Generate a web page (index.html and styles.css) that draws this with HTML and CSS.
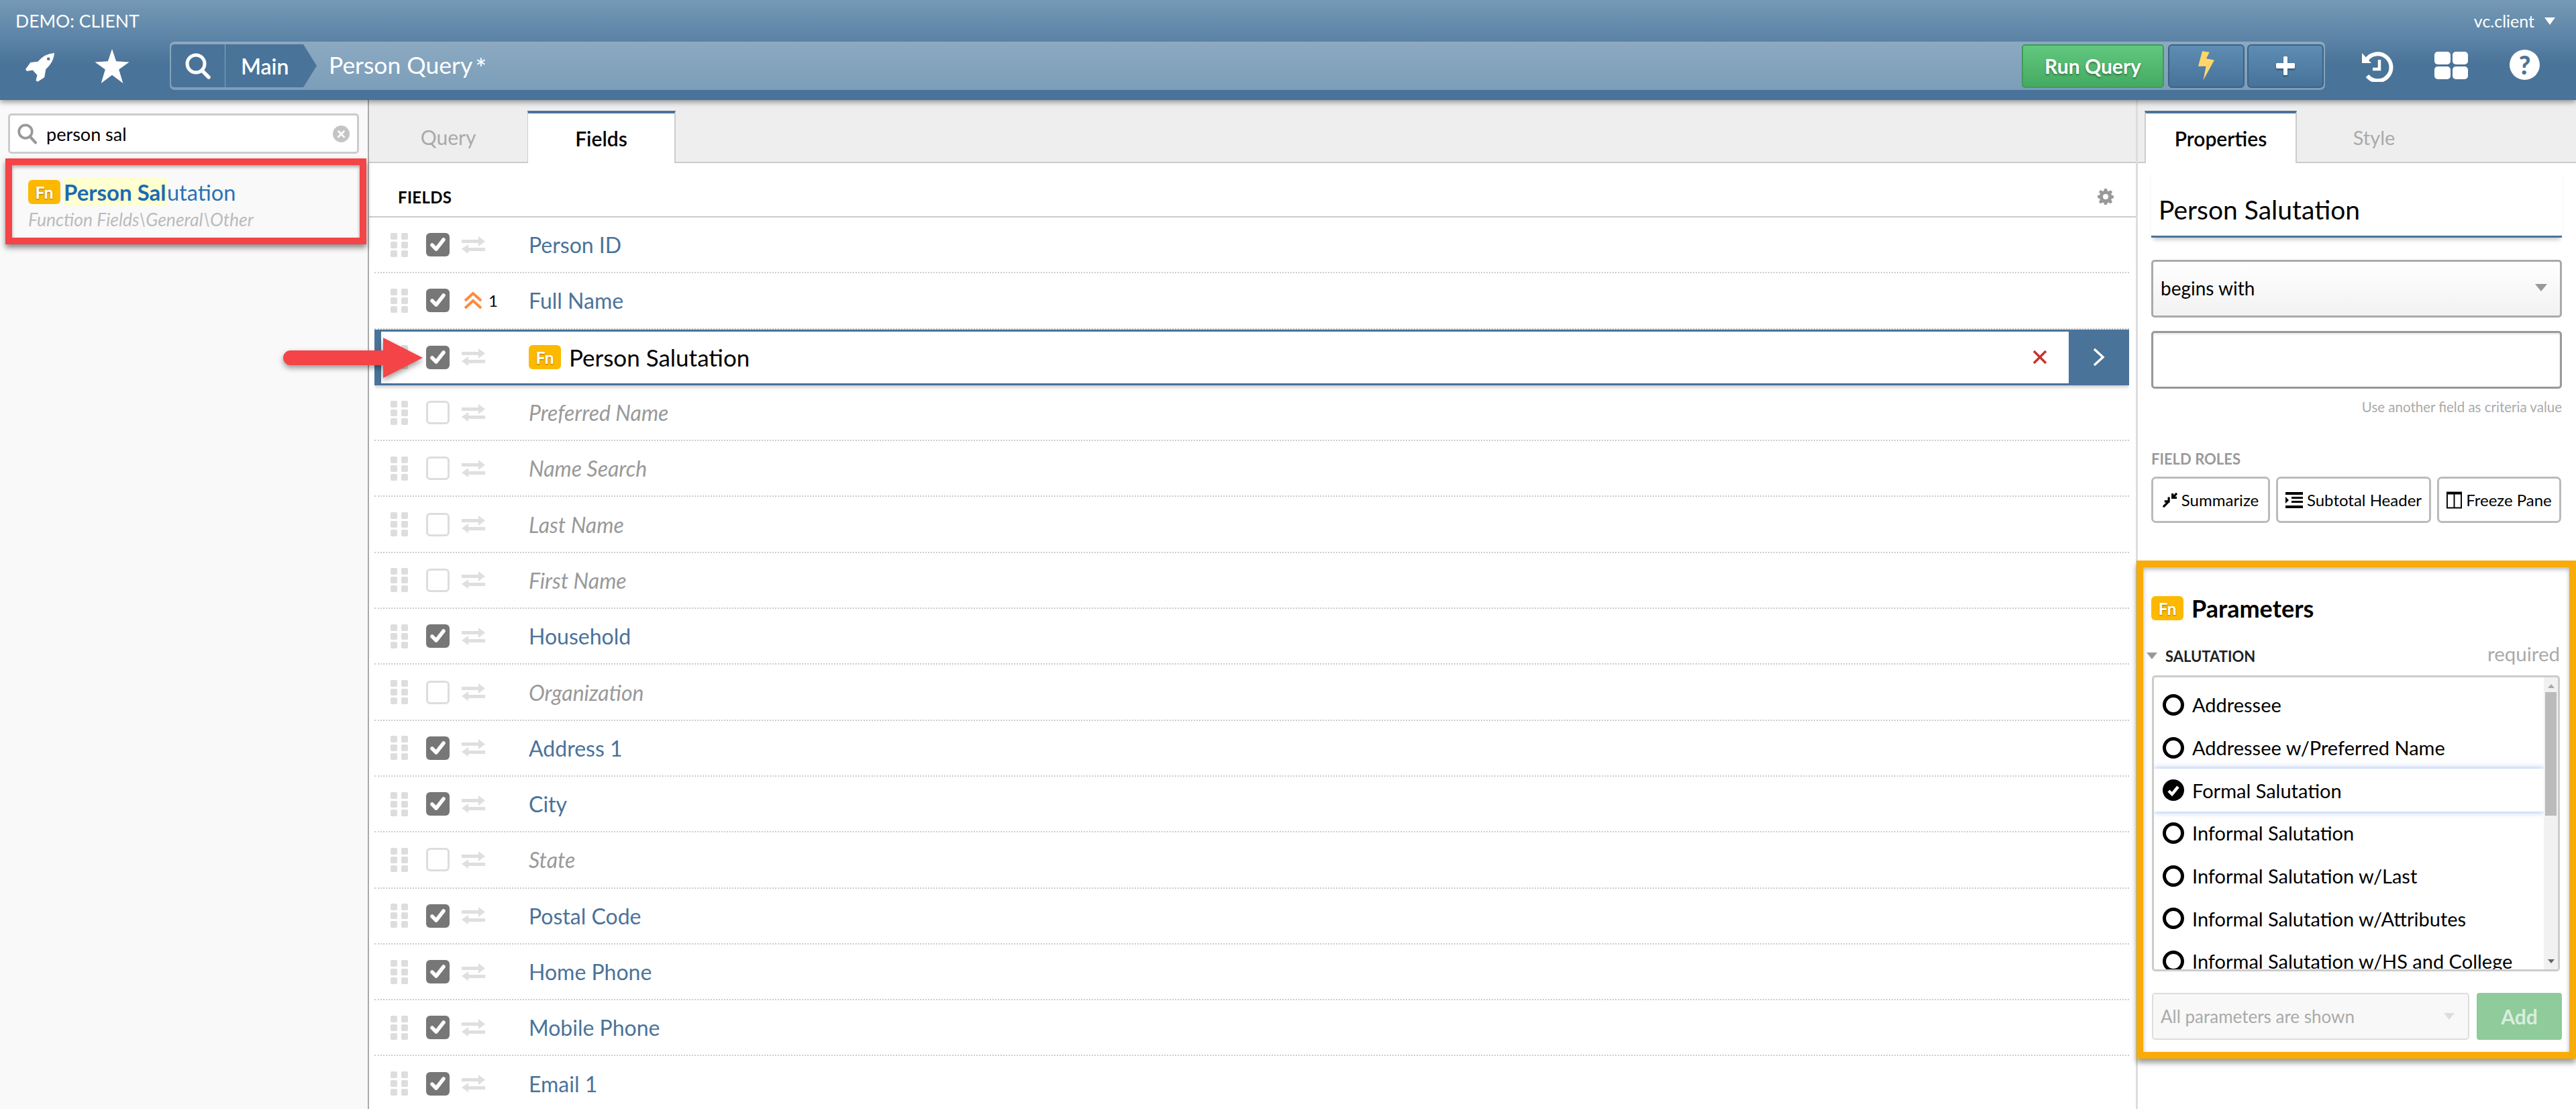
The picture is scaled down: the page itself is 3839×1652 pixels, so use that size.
FILE: index.html
```html
<!DOCTYPE html>
<html lang="en">
<head>
<meta charset="utf-8">
<title>Person Query</title>
<link rel="stylesheet" href="styles.css">
</head>
<body>
<svg class="defs" width="0" height="0" aria-hidden="true">
  <symbol id="i-check" viewBox="0 0 35 35"><path d="M9 18l6 6L26 10" fill="none" stroke="#fff" stroke-width="5.5" stroke-linecap="round" stroke-linejoin="round"/></symbol>
  <symbol id="i-swap" viewBox="0 0 35 26"><path d="M0 5h25V0l10 7.5L25 15v-5H0zM35 17H10v-5L0 19l10 7v-4h25z" fill="#dfdfdf"/></symbol>
</svg>
<header class="topbar">
  <div class="top-row"><span class="demo">DEMO: CLIENT</span><span class="user">vc.client<i class="caret-white"></i></span></div>
  <div class="nav-row">
    <svg class="ic-rocket" viewBox="0 0 128 128"><path fill="#fff" fill-rule="evenodd" d="M128 0C100 2 75 14 55 38L22 42 0 72l6 8 26-4 20 22-6 24 8 5 30-19 6-36C115 50 126 25 128 0ZM102 19a7 7 0 1 1 0 14 7 7 0 0 1 0-14Z"/></svg>
    <svg class="ic-star" viewBox="0 0 100 100"><path fill="#fff" d="M50 0 62 36 100 38 70 60 82 100 50 76 18 100 30 60 0 38 38 36Z"/></svg>
    <div class="crumbs">
      <div class="crumb-search"><svg viewBox="0 0 40 40" class="ic-search"><circle cx="17" cy="17" r="13" fill="none" stroke="#fff" stroke-width="5"/><path d="M26 27l10 10" stroke="#fff" stroke-width="5.5" stroke-linecap="round"/></svg></div>
      <div class="crumb-main">Main</div>
      <div class="crumb-title">Person Query <span class="star-mark">*</span></div>
      <button class="btn-run">Run Query</button>
      <button class="btn-blue"><svg viewBox="0 0 72 131" class="ic-bolt"><path fill="#ffd66b" d="M18 0 50 5 36 33 72 40 22 131 35 68 0 68Z"/></svg></button>
      <button class="btn-blue"><svg viewBox="0 0 30 30" class="ic-plus"><path fill="#fff" d="M12 2a2 2 0 0 1 2-1h2a2 2 0 0 1 2 1v9h10a2 2 0 0 1 1 2v4a2 2 0 0 1-1 2H18v9a2 2 0 0 1-2 1h-2a2 2 0 0 1-2-1v-9H2a2 2 0 0 1-1-2v-4a2 2 0 0 1 1-2h10z"/></svg></button>
    </div>
    <svg class="ic-history" viewBox="0 0 48 46"><path d="M7 13A20 20 0 1 1 8 37" fill="none" stroke="#fff" stroke-width="6"/><path fill="#fff" d="M0 3 14 18H0Z"/><path d="M26 13v14H16" fill="none" stroke="#fff" stroke-width="4.5"/></svg>
    <div class="ic-grid"><i></i><i></i><i></i><i></i></div>
    <div class="ic-help">?</div>
  </div>
</header>
<main class="body">
  <aside class="left">
    <div class="search">
      <svg viewBox="0 0 40 40" class="ic-search-small"><circle cx="16" cy="16" r="13" fill="none" stroke="#999" stroke-width="5"/><path d="M25 26l11 12" stroke="#999" stroke-width="5.5" stroke-linecap="round"/></svg>
      <span class="search-text">person sal</span>
      <span class="clear">&#215;</span>
    </div>
    <div class="result">
      <div class="result-name"><span class="fn">Fn</span><span class="hl">Person Sal</span><span>utation</span></div>
      <div class="result-sub">Function Fields\General\Other</div>
    </div>
  </aside>
  <section class="center">
    <nav class="tabs">
      <div class="tab tab-query">Query</div>
      <div class="tab tab-active">Fields</div>
    </nav>
    <div class="fields-head"><span>FIELDS</span>
      <svg viewBox="0 0 24 24" class="ic-gear"><path fill="#999" fill-rule="evenodd" d="M10 0h4l.6 3.3 2 .8L19.400 2.200l2.800 2.800-2 2.800.9 2L24 10.400v3.800l-2.900.6-.9 2 2 2.800-2.800 2.800-2.800-2-2 .9-.6 2.900h-4l-.6-3-2-.8-2.800 2-2.800-2.800 2-2.800-.8-2L0 14v-4l3.100-.6.800-2-2-2.700L4.700 1.900l2.800 2 1.900-.8zM12 8a4 4 0 1 0 0 8 4 4 0 0 0 0-8z"/></svg>
    </div>
    <div class="rows">
      <div class="row"><div class="grip"><i></i><i></i><i></i><i></i><i></i><i></i></div><div class="cb on"><svg><use href="#i-check"/></svg></div><svg class="swap"><use href="#i-swap"/></svg><div class="name">Person ID</div></div>
      <div class="row"><div class="grip"><i></i><i></i><i></i><i></i><i></i><i></i></div><div class="cb on"><svg><use href="#i-check"/></svg></div><div class="sort"><svg viewBox="0 0 28 26" class="ic-sort"><path d="M2 13 14 2l12 11M2 24 14 13l12 11" fill="none" stroke="#ff8a3c" stroke-width="4"/></svg><span>1</span></div><div class="name">Full Name</div></div>
      <div class="row row-sel"><div class="grip"><i></i><i></i><i></i><i></i><i></i><i></i></div><div class="cb on"><svg><use href="#i-check"/></svg></div><svg class="swap"><use href="#i-swap"/></svg><div class="name name-sel"><span class="fn">Fn</span>Person Salutation</div>
        <svg viewBox="0 0 22 22" class="ic-x"><path d="M2 2l18 18M20 2 2 20" stroke="#c8322f" stroke-width="3.500"/></svg>
        <div class="row-go"><svg viewBox="0 0 18 28" class="ic-chev"><path d="M2 2l13 12L2 26" fill="none" stroke="#fff" stroke-width="3.500"/></svg></div>
      </div>
      <div class="row off"><div class="grip"><i></i><i></i><i></i><i></i><i></i><i></i></div><div class="cb"></div><svg class="swap"><use href="#i-swap"/></svg><div class="name">Preferred Name</div></div>
      <div class="row off"><div class="grip"><i></i><i></i><i></i><i></i><i></i><i></i></div><div class="cb"></div><svg class="swap"><use href="#i-swap"/></svg><div class="name">Name Search</div></div>
      <div class="row off"><div class="grip"><i></i><i></i><i></i><i></i><i></i><i></i></div><div class="cb"></div><svg class="swap"><use href="#i-swap"/></svg><div class="name">Last Name</div></div>
      <div class="row off"><div class="grip"><i></i><i></i><i></i><i></i><i></i><i></i></div><div class="cb"></div><svg class="swap"><use href="#i-swap"/></svg><div class="name">First Name</div></div>
      <div class="row"><div class="grip"><i></i><i></i><i></i><i></i><i></i><i></i></div><div class="cb on"><svg><use href="#i-check"/></svg></div><svg class="swap"><use href="#i-swap"/></svg><div class="name">Household</div></div>
      <div class="row off"><div class="grip"><i></i><i></i><i></i><i></i><i></i><i></i></div><div class="cb"></div><svg class="swap"><use href="#i-swap"/></svg><div class="name">Organization</div></div>
      <div class="row"><div class="grip"><i></i><i></i><i></i><i></i><i></i><i></i></div><div class="cb on"><svg><use href="#i-check"/></svg></div><svg class="swap"><use href="#i-swap"/></svg><div class="name">Address 1</div></div>
      <div class="row"><div class="grip"><i></i><i></i><i></i><i></i><i></i><i></i></div><div class="cb on"><svg><use href="#i-check"/></svg></div><svg class="swap"><use href="#i-swap"/></svg><div class="name">City</div></div>
      <div class="row off"><div class="grip"><i></i><i></i><i></i><i></i><i></i><i></i></div><div class="cb"></div><svg class="swap"><use href="#i-swap"/></svg><div class="name">State</div></div>
      <div class="row"><div class="grip"><i></i><i></i><i></i><i></i><i></i><i></i></div><div class="cb on"><svg><use href="#i-check"/></svg></div><svg class="swap"><use href="#i-swap"/></svg><div class="name">Postal Code</div></div>
      <div class="row"><div class="grip"><i></i><i></i><i></i><i></i><i></i><i></i></div><div class="cb on"><svg><use href="#i-check"/></svg></div><svg class="swap"><use href="#i-swap"/></svg><div class="name">Home Phone</div></div>
      <div class="row"><div class="grip"><i></i><i></i><i></i><i></i><i></i><i></i></div><div class="cb on"><svg><use href="#i-check"/></svg></div><svg class="swap"><use href="#i-swap"/></svg><div class="name">Mobile Phone</div></div>
      <div class="row"><div class="grip"><i></i><i></i><i></i><i></i><i></i><i></i></div><div class="cb on"><svg><use href="#i-check"/></svg></div><svg class="swap"><use href="#i-swap"/></svg><div class="name">Email 1</div></div>
    </div>
  </section>
  <aside class="right">
    <nav class="rtabs">
      <div class="rtab rtab-active">Properties</div>
      <div class="rtab">Style</div>
    </nav>
    <div class="props">
      <div class="title-field">Person Salutation</div>
      <div class="select"><span>begins with</span><i class="caret-gray"></i></div>
      <div class="input"></div>
      <div class="hint">Use another field as criteria value</div>
      <div class="roles-label">FIELD ROLES</div>
      <div class="roles">
        <button class="role role-a"><svg viewBox="0 0 24 24" class="ic-role"><path d="M1 23l9-9M10 7v7H3M23 1l-6 6M16 1v7h7" fill="none" stroke="#000" stroke-width="3.500"/></svg>Summarize</button>
        <button class="role role-b"><svg viewBox="0 0 26 24" class="ic-role-w"><path d="M0 0h26v4H0zM0 20h26v4H0zM9 7h17v3H9zM9 13h17v3H9zM0 7l5 5-5 5z"/></svg>Subtotal Header</button>
        <button class="role role-c"><svg viewBox="0 0 24 26" class="ic-role-f"><path fill-rule="evenodd" d="M0 0h24v26H0zM2 4v20h9V4zm11 0v20h9V4z"/></svg>Freeze Pane</button>
      </div>
    </div>
    <section class="params">
      <h2 class="params-head"><span class="fn">Fn</span>Parameters</h2>
      <div class="sal-row"><i class="caret-gray small"></i><span class="sal">SALUTATION</span><span class="req">required</span></div>
      <div class="list">
        <div class="opts">
          <div class="opt"><i class="radio"></i>Addressee</div>
          <div class="opt"><i class="radio"></i>Addressee w/Preferred Name</div>
          <div class="opt opt-sel"><i class="radio checked"><svg viewBox="0 0 32 32"><path d="M9 17l5 5 9-11" fill="none" stroke="#fff" stroke-width="4.500"/></svg></i>Formal Salutation</div>
          <div class="opt"><i class="radio"></i>Informal Salutation</div>
          <div class="opt"><i class="radio"></i>Informal Salutation w/Last</div>
          <div class="opt"><i class="radio"></i>Informal Salutation w/Attributes</div>
          <div class="opt"><i class="radio"></i>Informal Salutation w/HS and College</div>
        </div>
        <div class="scroll"><i class="up"></i><i class="thumb"></i><i class="down"></i></div>
      </div>
      <div class="add-row">
        <div class="add-select"><span>All parameters are shown</span><i class="caret-light"></i></div>
        <button class="add">Add</button>
      </div>
    </section>
  </aside>
</main>
<svg class="arrow" viewBox="0 0 212 62"><path fill="#f44447" d="M11 19H149V0L208 30 149 60V41H11a11 11 0 0 1 0-22Z"/></svg>
</body>
</html>
```

FILE: styles.css
```css
* { box-sizing: border-box; }
html, body { margin: 0; padding: 0; }
body {
  width: 3839px; height: 1652px; overflow: hidden; position: relative;
  font-family: Lato, "Open Sans", sans-serif; color: #000; background: #fff;
  display: flex; flex-direction: column;
}
.defs { position: absolute; }
button { font-family: inherit; margin: 0; padding: 0; cursor: default; }
i { display: block; }

/* top bar */
.topbar {
  height: 149px; flex: none; position: relative; z-index: 3;
  background: linear-gradient(#7599b6 0, #5a82a5 62px, #4a7399 95px, #4a7399 100%);
  box-shadow: 0 3px 8px rgba(0,0,0,.4);
}
.top-row { height: 62px; display: flex; justify-content: space-between; align-items: center; padding: 0 31px 0 23px; }
.demo { font-size: 26.500px; color: #fff; }
.user { font-size: 25px; color: #fff; display: flex; align-items: center; gap: 15px; }
.caret-white { width: 0; height: 0; border: 8.500px solid transparent; border-top: 11px solid #fff; border-bottom: 0; }
.nav-row { display: flex; align-items: flex-start; height: 87px; }
.ic-rocket { width: 43px; height: 43px; margin: 17px 0 0 38px; }
.ic-star { width: 52px; height: 51px; margin: 11px 0 0 60px; }
.crumbs {
  width: 3212px; height: 72px; margin-left: 60px; display: flex; align-items: center; padding: 0 2px;
  background: linear-gradient(#8ca9c1, #7c9eb9); border-radius: 7px;
}
.crumb-search { width: 80px; height: 64px; background: #4a7399; border-radius: 5px 0 0 5px; display: flex; align-items: center; justify-content: center; margin-right: 1px; }
.ic-search { width: 40px; height: 40px; }
.crumb-main {
  width: 136px; height: 64px; background: #4a7399; color: #fff; font-size: 32px; font-weight: 600;
  display: flex; align-items: center; padding-left: 23px;
  clip-path: polygon(0 0, 116px 0, 100% 50%, 116px 100%, 0 100%);
}
.crumb-title { flex: 1; color: #fff; font-size: 35.500px; padding-left: 18px; display: flex; align-items: flex-start; gap: 4px; }
.star-mark { font-size: 40px; line-height: 40px; margin-top: 7px; }
.btn-run {
  width: 212px; height: 65px; border: 2px solid #3f9a58; border-radius: 5px; color: #fff; font-size: 30px; font-weight: 700;
  background: linear-gradient(#62c87f, #44a961); text-shadow: 0 2px 3px rgba(0,0,0,.35); margin-right: 6px;
}
.btn-blue {
  width: 114px; height: 65px; border: 2px solid #3d6384; border-radius: 6px; margin-right: 4px;
  background: linear-gradient(#5d8db4, #47729a); display: flex; align-items: center; justify-content: center;
}
.btn-blue:last-child { margin-right: 0; }
.ic-bolt { width: 24px; height: 44px; }
.ic-plus { width: 30px; height: 30px; filter: drop-shadow(0 2px 1px rgba(0,0,0,.35)); }
.ic-history { width: 48px; height: 46px; margin: 14px 0 0 55px; }
.ic-grid { width: 50px; height: 41px; margin: 15px 0 0 60px; display: grid; grid-template-columns: 1fr 1fr; grid-template-rows: 1fr 1fr; gap: 3px; }
.ic-grid i { background: #fff; border-radius: 5px; }
.ic-help {
  width: 45px; height: 45px; margin: 12px 0 0 62px; border-radius: 50%; background: #fff; color: #4a7399;
  font-size: 38px; font-weight: 900; line-height: 45px; text-align: center;
}

/* columns */
.body { flex: 1; display: flex; min-height: 0; }
.left { width: 550px; flex: none; background: #f9f9f9; border-right: 2px solid #aaa; padding-top: 20px; position: relative; z-index: 2; }
.center { width: 2636px; flex: none; border-right: 3px solid #ddd; display: flex; flex-direction: column; min-height: 0; overflow: hidden; }
.right { flex: 1; min-width: 0; display: flex; flex-direction: column; }

/* left */
.search {
  height: 60px; margin: 0 13px 0 12px; background: #fff; border: 3px solid #ccc; border-radius: 5px;
  display: flex; align-items: center; padding-left: 11px;
}
.ic-search-small { width: 30px; height: 32px; flex: none; }
.search-text { font-size: 27px; margin-left: 13px; flex: 1; }
.clear {
  width: 25px; height: 25px; margin-right: 11px; border-radius: 50%; background: #c4c4c4; color: #fff;
  font-size: 24px; font-weight: 900; line-height: 24px; text-align: center;
}
.result {
  width: 538px; height: 128px; margin: 7px 0 0 8px; border: 10px solid #f44447; background: #f9f9f9; padding: 19px 0 0 24px;
  box-shadow: 0 5px 8px rgba(0,0,0,.45), inset 0 3px 5px rgba(0,0,0,.3);
}
.result-name { display: flex; align-items: center; font-size: 32.500px; color: #2a72b5; height: 42px; }
.result-name .fn { margin-right: 5px; }
.hl { background: #ffffcf; color: #1a6bb3; font-weight: 700; font-size: 33px; height: 42px; line-height: 42px; width: 154px; white-space: nowrap; overflow: hidden; }
.result-sub { font-size: 26.500px; font-style: italic; color: #bbb; margin-top: 4px; }
.fn {
  width: 48px; height: 36px; flex: none; display: inline-flex; align-items: center; justify-content: center;
  background: #fdb900; border-radius: 6px; color: #fff; font-size: 25px; font-weight: 700; text-shadow: 0 1px 2px rgba(120,80,0,.7);
}

/* center */
.tabs { height: 94px; flex: none; padding-top: 16px; display: flex; background: #eee; border-bottom: 2px solid #ccc; }
.tab { font-size: 30px; display: flex; align-items: center; justify-content: center; height: 78px; }
.tab-query { width: 236px; color: #aaa; }
.tab-active { width: 221px; background: #fff; border-top: 4px solid #4a7399; border-right: 2px solid #ccc; border-left: 1px solid #ccc; font-weight: 600; }
.fields-head {
  height: 81px; flex: none; border-bottom: 2px solid #ccc; display: flex; align-items: center; justify-content: space-between;
  padding: 24px 33px 0 43px; font-size: 24px; font-weight: 700; letter-spacing: .3px;
}
.fields-head span { margin-bottom: 2px; }
.ic-gear { width: 24px; height: 24px; margin-bottom: 4px; }
.rows { margin: 0 10px 0 8px; flex: 1; min-height: 0; overflow: hidden; padding-top: 0; }
.row {
  height: 83.300px; border-bottom: 2px dotted #ccc; display: grid; grid-template-columns: 53px 53px 100px 1fr; align-items: center;
  padding-left: 24px; position: relative;
}
.grip { width: 26px; height: 36px; display: grid; grid-template-columns: 10px 10px; grid-template-rows: repeat(3, 10px); gap: 3px 6px; }
.grip i { background: #ddd; border-radius: 2px; }
.cb { width: 35px; height: 35px; border: 3px solid #ddd; border-radius: 6px; background: #fff; }
.cb.on { background: #777; border: 0; }
.cb svg { width: 35px; height: 35px; display: block; }
.swap { width: 35px; height: 26px; }
.sort { display: flex; align-items: center; font-size: 24px; gap: 9px; padding-left: 3px; }
.ic-sort { width: 28px; height: 26px; }
.name { font-size: 32px; color: #4a7399; }
.off .name { color: #999; font-style: italic; }
.row-sel {
  border: 0; border-top: 3px solid #4a7399; border-bottom: 3px solid #4a7399; border-left: 10px solid #4a7399; padding-left: 14px;
  grid-template-columns: 53px 53px 100px 1fr auto 90px; box-shadow: 0 2px 6px rgba(0,0,0,.25); background: #fff;
}
.name-sel { color: #000; font-size: 35px; display: flex; align-items: center; gap: 12px; }
.ic-x { width: 22px; height: 22px; margin-right: 32px; }
.row-go { height: 83px; margin: -3px 0; background: #4a7399; display: flex; align-items: center; justify-content: center; }
.ic-chev { width: 18px; height: 28px; }

/* right */
.rtabs { height: 94px; flex: none; padding: 16px 0 0 10px; display: flex; background: #eee; border-bottom: 2px solid #ccc; }
.rtab { width: 230px; height: 78px; font-size: 29px; color: #aaa; display: flex; align-items: center; justify-content: center; }
.rtab-active { width: 227px; background: #fff; color: #000; font-size: 30px; font-weight: 600; border-top: 4px solid #4a7399; border-left: 2px solid #ccc; border-right: 2px solid #ccc; }
.props { padding: 7px 21px 0 20px; }
.title-field {
  height: 104px; padding: 39px 0 0 11px; font-size: 39px; border-bottom: 3px solid #4a7399; background: #fff;
  box-shadow: 0 6px 6px -3px rgba(0,0,0,.22);
}
.select {
  height: 86px; margin-top: 33px; border: 3px solid #aaa; border-radius: 5px; display: flex; align-items: center; justify-content: space-between;
  padding: 0 19px 3px 11px; font-size: 28px; background: linear-gradient(#fff, #f2f2f2);
}
.caret-gray { width: 0; height: 0; border: 9px solid transparent; border-top: 11px solid #999; border-bottom: 0; }
.caret-gray.small { border-width: 8px; border-top-width: 10px; border-bottom: 0; }
.input { height: 86px; margin-top: 20px; border: 3px solid #999; border-radius: 5px; background: #fff; box-shadow: inset 0 2px 3px rgba(0,0,0,.1); }
.hint { height: 26px; margin-top: 14px; text-align: right; font-size: 20.500px; line-height: 26px; color: #aaa; }
.roles-label { height: 30px; margin-top: 50px; font-size: 22px; line-height: 30px; font-weight: 700; color: #999; }
.roles { display: flex; gap: 9px; margin-top: 11px; }
.role {
  height: 69px; background: #fff; border: 3px solid #bbb; border-radius: 7px; font-size: 24px; color: #000;
  display: flex; align-items: center; justify-content: center; gap: 6px;
}
.role-a { width: 177px; } .role-b { width: 231px; } .role-c { width: 185px; }
.ic-role { width: 22px; height: 24px; }
.ic-role-w { width: 26px; height: 24px; }
.ic-role-f { width: 23px; height: 26px; }

.params {
  margin: 56px 0 0 -2px; height: 742px; border: 10px solid #f9ab07; padding: 43px 11px 18px 12px; background: #fff;
  box-shadow: 0 6px 8px rgba(0,0,0,.4), inset 0 3px 6px rgba(0,0,0,.3); position: relative;
}
.params-head { margin: 0; height: 35px; display: flex; align-items: center; gap: 12px; font-size: 36px; font-weight: 700; }
.sal-row { height: 36px; margin-top: 36px; display: flex; align-items: center; margin-left: -7px; margin-right: 3px; }
.sal { font-size: 22px; font-weight: 700; color: #222; margin-left: 12px; flex: 1; }
.req { font-size: 29.500px; color: #aaa; margin-top: -8px; }
.list { height: 441px; margin: 11px 3px 0 1px; border: 3px solid #ccc; border-radius: 5px; display: flex; overflow: hidden; background: #fff; }
.opts { flex: 1; padding-top: 9px; overflow: hidden; }
.opt { height: 63.700px; display: flex; align-items: center; gap: 12px; padding-left: 13px; font-size: 29px; white-space: nowrap; }
.opt-sel { box-shadow: 0 0 9px rgba(90,140,230,.65); position: relative; }
.radio { width: 32px; height: 32px; flex: none; border: 5px solid #000; border-radius: 50%; background: #fff; }
.radio.checked { border: 0; background: #000; }
.radio svg { width: 32px; height: 32px; display: block; }
.scroll { width: 21px; background: #f1f1f1; display: flex; flex-direction: column; align-items: center; position: relative; }
.up { width: 0; height: 0; margin-top: 10px; border: 5px solid transparent; border-bottom: 6px solid #aaa; border-top: 0; }
.thumb { width: 17px; height: 184px; margin-top: 6px; background: #bbb; }
.down { width: 0; height: 0; margin-top: auto; margin-bottom: 9px; border: 5px solid transparent; border-top: 6px solid #666; border-bottom: 0; }
.add-row { display: flex; gap: 11px; margin-top: 32px; margin-left: 1px; }
.add-select {
  width: 473px; height: 70px; background: #f8f8f8; border: 2.500px solid #ddd; border-radius: 5px; display: flex; align-items: center; justify-content: space-between;
  padding: 0 20px 0 11px; font-size: 26px; color: #aaa;
}
.caret-light { width: 0; height: 0; border: 8px solid transparent; border-top: 10px solid #ddd; border-bottom: 0; }
.add { width: 127px; height: 70px; border: 0; border-radius: 4px; background: #8fcb9b; color: #d9eedd; font-size: 30px; font-weight: 700; }

.arrow { position: absolute; left: 422px; top: 503px; width: 212px; height: 62px; z-index: 5; filter: drop-shadow(0 4px 4px rgba(0,0,0,.4)); }
```
